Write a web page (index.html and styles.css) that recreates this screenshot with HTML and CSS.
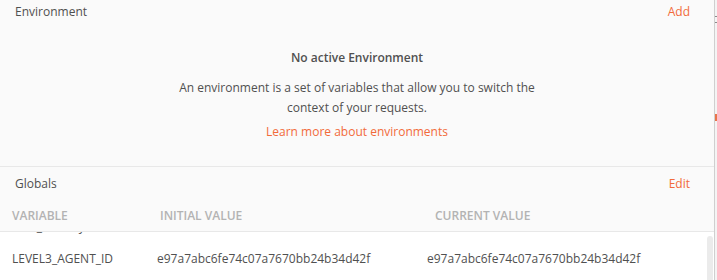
FILE: index.html
```html
<!DOCTYPE html>
<html>
<head>
<meta charset="utf-8">
<link rel="stylesheet" href="styles.css">
</head>
<body>
<div class="app">
  <div class="panel">
    <section class="env">
      <div class="sec-head">
        <span class="sec-title">Environment</span>
        <span class="link">Add</span>
      </div>
      <div class="empty">
        <div class="empty-title">No active Environment</div>
        <div class="empty-text">An environment is a set of variables that allow you to switch the<br>context of your requests.</div>
        <div class="link empty-link">Learn more about environments</div>
      </div>
    </section>
    <section class="globals">
      <div class="sec-head">
        <span class="sec-title">Globals</span>
        <span class="link">Edit</span>
      </div>
      <div class="thead">
        <span class="c1">VARIABLE</span>
        <span class="c2">INITIAL VALUE</span>
        <span class="c3">CURRENT VALUE</span>
      </div>
      <div class="tbody">
        <div class="rows">
          <div class="row hidden-row">
            <span class="c1">user_country</span>
            <span class="c2">e97a7abc6fe74c07a7670bb24b34d42f</span>
            <span class="c3">e97a7abc6fe74c07a7670bb24b34d42f</span>
          </div>
          <div class="row main-row">
            <span class="c1">LEVEL3_AGENT_ID</span>
            <span class="c2">e97a7abc6fe74c07a7670bb24b34d42f</span>
            <span class="c3">e97a7abc6fe74c07a7670bb24b34d42f</span>
          </div>
        </div>
        <div class="scrollbar"></div>
      </div>
    </section>
  </div>
  <div class="edge">
    <i class="tick t1"></i>
    <i class="tick t2"></i>
    <i class="mark"></i>
  </div>
</div>
</body>
</html>
```
FILE: styles.css
```css
html, body {
  margin: 0;
  padding: 0;
  background: #fafafa;
}
body {
  font-family: "Open Sans", "Liberation Sans", sans-serif;
  font-size: 12px;
  color: #505050;
  width: 717px;
  height: 280px;
  overflow: hidden;
}
.app {
  display: flex;
  height: 280px;
}
.panel {
  width: 714px;
  display: flex;
  flex-direction: column;
}
.edge {
  width: 2px;
  border-left: 1px solid #cfcfcf;
  background: #f4f4f4;
  display: flex;
  flex-direction: column;
}
.tick {
  display: block;
  height: 1px;
  width: 2px;
  background: #8a8a8a;
}
.t1 { margin-top: 16px; }
.t2 { margin-top: 5px; }
.mark {
  display: block;
  margin-top: 91px;
  height: 7px;
  width: 2px;
  background: #e8744a;
}
.env {
  height: 166px;
  border-bottom: 1px solid #e8e8e8;
  display: flex;
  flex-direction: column;
}
.sec-head {
  display: flex;
  justify-content: space-between;
  align-items: center;
  height: 22px;
  padding: 0 24px 0 15px;
}
.sec-title {
  color: #505050;
}
.link {
  color: #f26b3a;
}
.empty {
  text-align: center;
  padding-top: 26px;
}
.empty-title {
  font-weight: 600;
  line-height: 20px;
}
.empty-text {
  margin-top: 10px;
  line-height: 20px;
}
.empty-link {
  margin-top: 4px;
  line-height: 20px;
}
.globals {
  flex: 1;
  display: flex;
  flex-direction: column;
  min-height: 0;
}
.globals .sec-head {
  height: 33px;
}
.thead {
  display: flex;
  height: 31px;
  align-items: center;
  border-bottom: 1px solid #e8e8e8;
  color: #b3b3b3;
  font-weight: 600;
  text-transform: uppercase;
}
.thead .c1 { width: 148px; padding-left: 12px; }
.thead .c2 { width: 275px; }
.thead .c3 { flex: 1; }
.tbody {
  flex: 1;
  background: #ffffff;
  display: flex;
  min-height: 0;
}
.rows {
  flex: 1;
}
.row {
  display: flex;
  align-items: center;
  line-height: 16px;
}
.hidden-row {
  height: 5px;
  overflow: hidden;
  align-items: flex-start;
}
.hidden-row span {
  margin-top: -13px;
}
.main-row {
  height: 30px;
  margin-top: 7px;
}
.row .c1 { width: 145px; padding-left: 12px; }
.row .c2 { width: 270px; }
.row .c3 { flex: 1; }
.scrollbar {
  width: 6px;
  margin: 4px 1px 0 0;
  background: #ebebeb;
  border-radius: 3px 3px 0 0;
}
```
